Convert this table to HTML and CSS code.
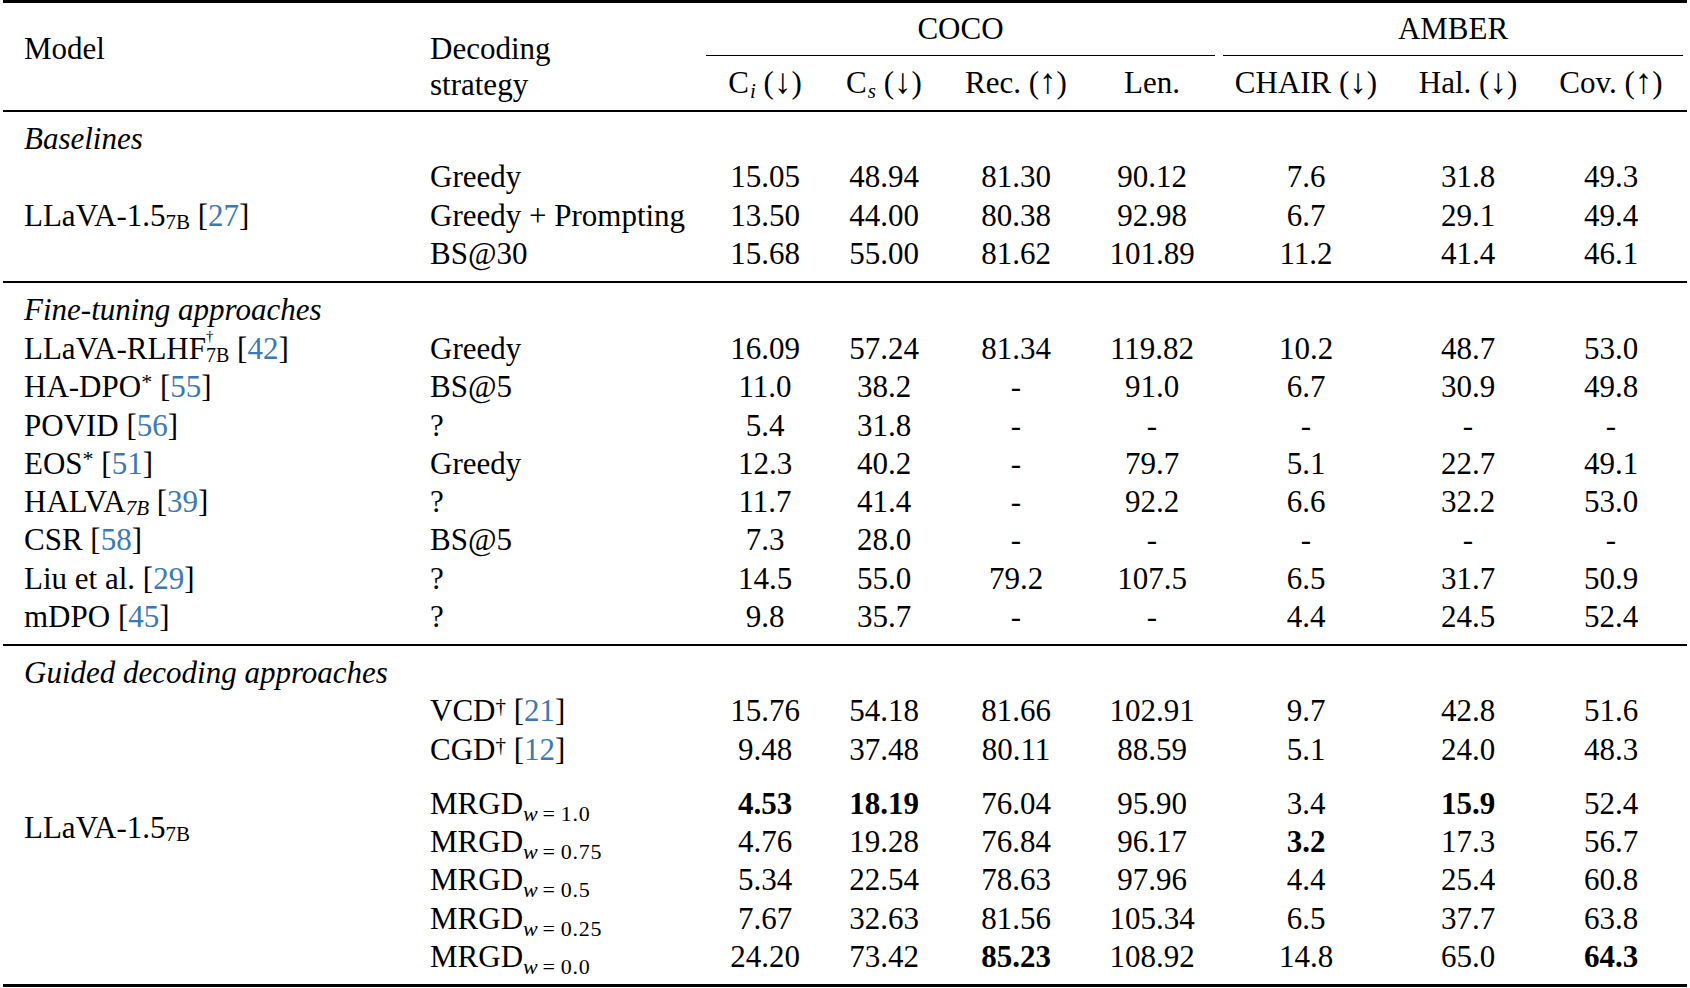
FILE: index.html
```html
<!DOCTYPE html>
<html lang="en">
<head>
<meta charset="utf-8">
<title>Results table</title>
<link rel="stylesheet" href="styles.css">
</head>
<body>
<table class="results">
  <colgroup>
    <col class="c-model"><col class="c-dec"><col class="c-ci"><col class="c-cs"><col class="c-rec"><col class="c-len"><col class="c-chair"><col class="c-hal"><col class="c-cov">
  </colgroup>
  <thead>
    <tr class="h1">
      <th rowspan="2" class="l first stack">Model</th>
      <th rowspan="2" class="l second stack">Decoding<br>strategy</th>
      <th colspan="4" class="group"><div class="cmid coco">COCO</div></th>
      <th colspan="3" class="group"><div class="cmid amber">AMBER</div></th>
    </tr>
    <tr class="h2">
      <th>C<sub class="mi">i</sub> (<span class="arr">↓</span>)</th>
      <th>C<sub class="mi">s</sub> (<span class="arr">↓</span>)</th>
      <th>Rec. (<span class="arr">↑</span>)</th>
      <th>Len.</th>
      <th>CHAIR (<span class="arr">↓</span>)</th>
      <th>Hal. (<span class="arr">↓</span>)</th>
      <th class="last">Cov. (<span class="arr">↑</span>)</th>
    </tr>
  </thead>
  <tbody>
    <tr><td colspan="9" class="l first section">Baselines</td></tr>
    <tr>
      <td rowspan="3" class="l first span3">LLaVA-1.5<sub class="tx">7B</sub> [<span class="cite">27</span>]</td>
      <td class="l second">Greedy</td><td>15.05</td><td>48.94</td><td>81.30</td><td>90.12</td><td>7.6</td><td>31.8</td><td class="last">49.3</td>
    </tr>
    <tr>
      <td class="l second">Greedy + Prompting</td><td>13.50</td><td>44.00</td><td>80.38</td><td>92.98</td><td>6.7</td><td>29.1</td><td class="last">49.4</td>
    </tr>
    <tr>
      <td class="l second">BS@30</td><td>15.68</td><td>55.00</td><td>81.62</td><td>101.89</td><td>11.2</td><td>41.4</td><td class="last">46.1</td>
    </tr>
  </tbody>
  <tbody>
    <tr><td colspan="9" class="l first section">Fine-tuning approaches</td></tr>
    <tr>
      <td class="l first">LLaVA-RLHF<span class="ss"><span class="ss-sup">†</span><span class="ss-sub">7B</span></span> [<span class="cite">42</span>]</td>
      <td class="l second">Greedy</td><td>16.09</td><td>57.24</td><td>81.34</td><td>119.82</td><td>10.2</td><td>48.7</td><td class="last">53.0</td>
    </tr>
    <tr>
      <td class="l first">HA-DPO<sup class="ast">*</sup> [<span class="cite">55</span>]</td>
      <td class="l second">BS@5</td><td>11.0</td><td>38.2</td><td>-</td><td>91.0</td><td>6.7</td><td>30.9</td><td class="last">49.8</td>
    </tr>
    <tr>
      <td class="l first">POVID [<span class="cite">56</span>]</td>
      <td class="l second">?</td><td>5.4</td><td>31.8</td><td>-</td><td>-</td><td>-</td><td>-</td><td class="last">-</td>
    </tr>
    <tr>
      <td class="l first">EOS<sup class="ast">*</sup> [<span class="cite">51</span>]</td>
      <td class="l second">Greedy</td><td>12.3</td><td>40.2</td><td>-</td><td>79.7</td><td>5.1</td><td>22.7</td><td class="last">49.1</td>
    </tr>
    <tr>
      <td class="l first">HALVA<sub class="tx it">7B</sub> [<span class="cite">39</span>]</td>
      <td class="l second">?</td><td>11.7</td><td>41.4</td><td>-</td><td>92.2</td><td>6.6</td><td>32.2</td><td class="last">53.0</td>
    </tr>
    <tr>
      <td class="l first">CSR [<span class="cite">58</span>]</td>
      <td class="l second">BS@5</td><td>7.3</td><td>28.0</td><td>-</td><td>-</td><td>-</td><td>-</td><td class="last">-</td>
    </tr>
    <tr>
      <td class="l first">Liu et al. [<span class="cite">29</span>]</td>
      <td class="l second">?</td><td>14.5</td><td>55.0</td><td>79.2</td><td>107.5</td><td>6.5</td><td>31.7</td><td class="last">50.9</td>
    </tr>
    <tr>
      <td class="l first">mDPO [<span class="cite">45</span>]</td>
      <td class="l second">?</td><td>9.8</td><td>35.7</td><td>-</td><td>-</td><td>4.4</td><td>24.5</td><td class="last">52.4</td>
    </tr>
  </tbody>
  <tbody>
    <tr><td colspan="9" class="l first section">Guided decoding approaches</td></tr>
    <tr>
      <td rowspan="7" class="l first span7">LLaVA-1.5<sub class="tx">7B</sub></td>
      <td class="l second">VCD<sup class="dag">†</sup> [<span class="cite">21</span>]</td><td>15.76</td><td>54.18</td><td>81.66</td><td>102.91</td><td>9.7</td><td>42.8</td><td class="last">51.6</td>
    </tr>
    <tr>
      <td class="l second">CGD<sup class="dag">†</sup> [<span class="cite">12</span>]</td><td>9.48</td><td>37.48</td><td>80.11</td><td>88.59</td><td>5.1</td><td>24.0</td><td class="last">48.3</td>
    </tr>
    <tr class="gap">
      <td class="l second">MRGD<sub class="w"><i>w</i><span class="eq">=</span>1.0</sub></td><td><b>4.53</b></td><td><b>18.19</b></td><td>76.04</td><td>95.90</td><td>3.4</td><td><b>15.9</b></td><td class="last">52.4</td>
    </tr>
    <tr>
      <td class="l second">MRGD<sub class="w"><i>w</i><span class="eq">=</span>0.75</sub></td><td>4.76</td><td>19.28</td><td>76.84</td><td>96.17</td><td><b>3.2</b></td><td>17.3</td><td class="last">56.7</td>
    </tr>
    <tr>
      <td class="l second">MRGD<sub class="w"><i>w</i><span class="eq">=</span>0.5</sub></td><td>5.34</td><td>22.54</td><td>78.63</td><td>97.96</td><td>4.4</td><td>25.4</td><td class="last">60.8</td>
    </tr>
    <tr>
      <td class="l second">MRGD<sub class="w"><i>w</i><span class="eq">=</span>0.25</sub></td><td>7.67</td><td>32.63</td><td>81.56</td><td>105.34</td><td>6.5</td><td>37.7</td><td class="last">63.8</td>
    </tr>
    <tr>
      <td class="l second">MRGD<sub class="w"><i>w</i><span class="eq">=</span>0.0</sub></td><td>24.20</td><td>73.42</td><td><b>85.23</b></td><td>108.92</td><td>14.8</td><td>65.0</td><td class="last"><b>64.3</b></td>
    </tr>
  </tbody>
</table>
</body>
</html>
```

FILE: styles.css
```css
html, body {
  margin: 0;
  padding: 0;
  background: #ffffff;
}

body {
  font-family: "Liberation Serif", "Times New Roman", serif;
  font-size: 31px;
  color: #000000;
}

.results {
  margin-left: 3px;
  width: 1684px;
  table-layout: fixed;
  border-collapse: separate;
  border-spacing: 0;
  border-top: 3px solid #000;
  border-bottom: 3px solid #000;
}

.c-model { width: 417px; }
.c-dec   { width: 290px; }
.c-ci    { width: 110px; }
.c-cs    { width: 128px; }
.c-rec   { width: 136px; }
.c-len   { width: 136px; }
.c-chair { width: 172px; }
.c-hal   { width: 152px; }
.c-cov   { width: 143px; }

.results th,
.results td {
  padding: 0;
  font-weight: 400;
  line-height: 38.25px;
  white-space: nowrap;
  text-align: center;
  vertical-align: middle;
}

.results .l { text-align: left; }
.results .first { padding-left: 21px; }
.results .second { padding-left: 10px; }
.results .last { padding-right: 9px; }

/* header */
.results th.stack {
  vertical-align: top;
  padding-top: 28px;
  line-height: 35.5px;
}

.results th.group { line-height: 52px; }

.cmid {
  border-bottom: 1px solid #000;
}
.cmid.coco  { margin: 0 5px 0 -4px; }
.cmid.amber { margin: 0 4px 0 3px; }

.h2 th { line-height: 54px; }

.arr {
  font-size: 35px;
  line-height: 0;
}

/* rules between groups */
tbody > tr:first-child > td {
  border-top: 2px solid #000;
  padding-top: 8px;
}
tbody > tr:last-child > td {
  padding-bottom: 8px;
}

.section { font-style: italic; }

.results td.span3 { padding-bottom: 8px; }
.results td.span7 { padding-bottom: 20px; }

.results tr.gap > td { padding-top: 16px; }

/* scripts */
sub, sup {
  line-height: 0;
  font-size: 21px;
}

sub.tx { vertical-align: -3px; }
sub.it { font-style: italic; }

sub.mi {
  font-style: italic;
  vertical-align: -5px;
  margin-left: 1px;
}

sub.w {
  font-size: 22px;
  vertical-align: -7px;
  letter-spacing: 0.8px;
}
sub.w .eq { margin: 0 5px 0 4px; }

sup.ast { vertical-align: 8px; font-size: 22px; }
sup.dag { vertical-align: 8px; }

/* stacked dagger over subscript */
.ss {
  display: inline-flex;
  flex-direction: column;
  vertical-align: 17.5px;
}
.ss-sup {
  font-size: 15px;
  line-height: 14px;
}
.ss-sub {
  font-size: 20px;
  line-height: 25px;
}

.cite { color: #3b78b4; }

b { font-weight: 700; }
```
